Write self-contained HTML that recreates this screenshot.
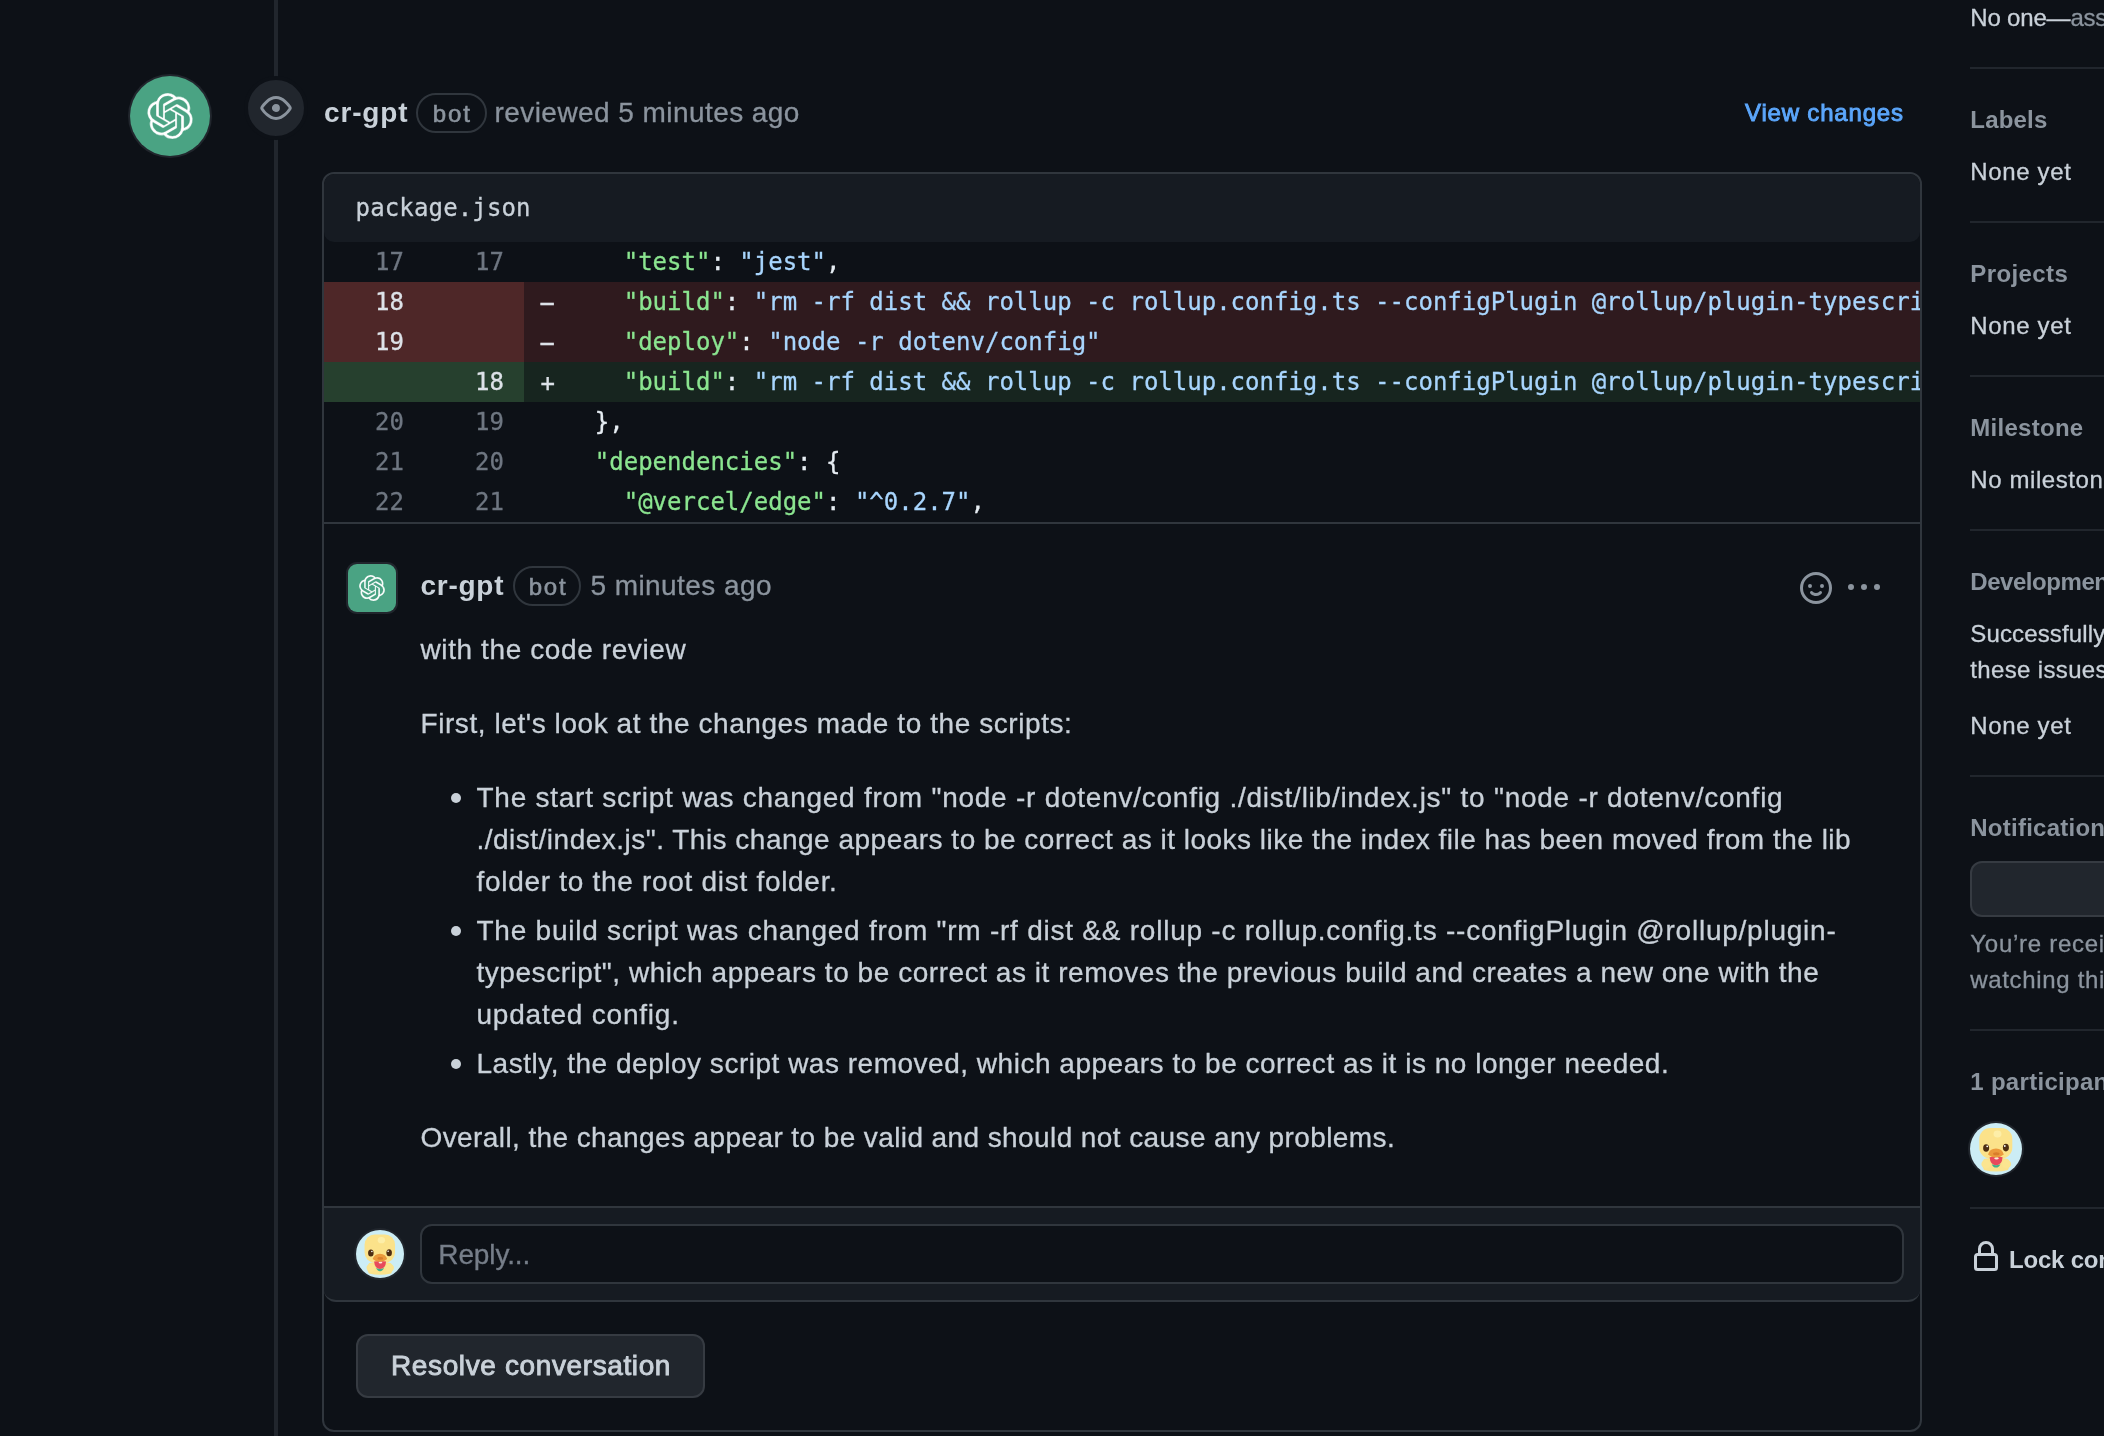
<!DOCTYPE html>
<html lang="en"><head><meta charset="utf-8"><title>cr-gpt review · package.json</title>
<style>
html,body{margin:0;padding:0;background:#0d1117;}
body{width:2104px;height:1436px;overflow:hidden;position:relative;will-change:transform;font-family:"Liberation Sans",Arial,sans-serif;color:#c9d1d9;}
.b{position:absolute;box-sizing:border-box;}
.t{position:absolute;white-space:pre;-webkit-text-stroke:0.3px currentColor;}
.md{-webkit-text-stroke:0.6px currentColor;}
.sb{-webkit-text-stroke:0.9px currentColor;}
.m{font-family:"DejaVu Sans Mono","Liberation Mono",monospace;}
svg{position:absolute;display:block;}
.k{color:#8be590}.s{color:#a8d5fd}.mk{transform:scaleX(2.1);transform-origin:7.2px 50%;}
</style></head><body>
<div class="b" style="left:274px;top:0px;width:4px;height:1436px;background:#21262d;"></div>
<div class="b" style="left:128px;top:74px;width:84px;height:84px;border-radius:50%;background:#21262d;"></div>
<div class="b" style="left:130px;top:76px;width:80px;height:80px;border-radius:50%;background:#4aa383;"></div>
<svg style="left:147px;top:93px" width="46" height="46" viewBox="0 0 24 24"><path fill="#fff" stroke="#4aa383" stroke-width="0.2" d="M22.2819 9.8211a5.9847 5.9847 0 0 0-.5157-4.9108 6.0462 6.0462 0 0 0-6.5098-2.9A6.0651 6.0651 0 0 0 4.9807 4.1818a5.9847 5.9847 0 0 0-3.9977 2.9 6.0462 6.0462 0 0 0 .7427 7.0966 5.98 5.98 0 0 0 .511 4.9107 6.051 6.051 0 0 0 6.5146 2.9001A5.9847 5.9847 0 0 0 13.2599 24a6.0557 6.0557 0 0 0 5.7718-4.2058 5.9894 5.9894 0 0 0 3.9977-2.9001 6.0557 6.0557 0 0 0-.7475-7.0729zm-9.022 12.6081a4.4755 4.4755 0 0 1-2.8764-1.0408l.1419-.0804 4.7783-2.7582a.7948.7948 0 0 0 .3927-.6813v-6.7369l2.02 1.1686a.071.071 0 0 1 .038.052v5.5826a4.504 4.504 0 0 1-4.4945 4.4944zm-9.6607-4.1254a4.4708 4.4708 0 0 1-.5346-3.0137l.142.0852 4.783 2.7582a.7712.7712 0 0 0 .7806 0l5.8428-3.3685v2.3324a.0804.0804 0 0 1-.0332.0615L9.74 19.9502a4.4992 4.4992 0 0 1-6.1408-1.6464zM2.3408 7.8956a4.485 4.485 0 0 1 2.3655-1.9728V11.6a.7664.7664 0 0 0 .3879.6765l5.8144 3.3543-2.0201 1.1685a.0757.0757 0 0 1-.071 0l-4.8303-2.7865A4.504 4.504 0 0 1 2.3408 7.872zm16.5963 3.8558L13.1038 8.364 15.1192 7.2a.0757.0757 0 0 1 .071 0l4.8303 2.7913a4.4944 4.4944 0 0 1-.6765 8.1042v-5.6772a.79.79 0 0 0-.407-.667zm2.0107-3.0231l-.142-.0852-4.7735-2.7818a.7759.7759 0 0 0-.7854 0L9.409 9.2297V6.8974a.0662.0662 0 0 1 .0284-.0615l4.8303-2.7866a4.4992 4.4992 0 0 1 6.6802 4.66zM8.3065 12.863l-2.02-1.1638a.0804.0804 0 0 1-.038-.0567V6.0742a4.4992 4.4992 0 0 1 7.3757-3.4537l-.142.0805L8.704 5.459a.7948.7948 0 0 0-.3927.6813zm1.0976-2.3654l2.602-1.4998 2.6069 1.4998v2.9994l-2.5974 1.4997-2.6067-1.4997Z"/></svg>
<div class="b" style="left:244px;top:76px;width:64px;height:64px;border-radius:50%;background:#21262d;border:4px solid #0d1117;"></div>
<svg style="left:260px;top:92px" width="32" height="32" viewBox="0 0 16 16"><path fill="#8b949e" d="M8 2c1.981 0 3.671.992 4.933 2.078 1.27 1.091 2.187 2.345 2.637 3.023a1.62 1.62 0 0 1 0 1.798c-.45.678-1.367 1.932-2.637 3.023C11.67 13.008 9.981 14 8 14c-1.981 0-3.671-.992-4.933-2.078C1.797 10.83.88 9.576.43 8.898a1.62 1.62 0 0 1 0-1.798c.45-.677 1.367-1.931 2.637-3.022C4.33 2.992 6.019 2 8 2ZM1.679 7.932a.12.12 0 0 0 0 .136c.411.622 1.241 1.75 2.366 2.717C5.176 11.758 6.527 12.5 8 12.5c1.473 0 2.825-.742 3.955-1.715 1.124-.967 1.954-2.096 2.366-2.717a.12.12 0 0 0 0-.136c-.412-.621-1.242-1.75-2.366-2.717C10.824 4.242 9.473 3.5 8 3.5c-1.473 0-2.825.742-3.955 1.715-1.124.967-1.954 2.096-2.366 2.717ZM8 10a2 2 0 1 1-.001-3.999A2 2 0 0 1 8 10Z"/></svg>
<div class="t" style="left:324.0px;top:91.5px;font-size:28px;line-height:42px;color:#c9d1d9;font-weight:700;-webkit-text-stroke:0;letter-spacing:0.831px;">cr-gpt</div>
<div class="b" style="left:416px;top:93px;width:71px;height:40px;border:2px solid #30363d;border-radius:20px;"></div>
<div class="t md" style="left:432.8px;top:95.5px;font-size:24px;line-height:36px;color:#8b949e;letter-spacing:1.820px;">bot</div>
<div class="t" style="left:494.5px;top:91.5px;font-size:28px;line-height:42px;color:#8b949e;letter-spacing:0.438px;">reviewed 5 minutes ago</div>
<div class="t sb" style="left:1745.0px;top:94.5px;font-size:24px;line-height:36px;color:#5ba6fb;letter-spacing:0.821px;">View changes</div>
<div class="b" style="left:322px;top:172px;width:1600px;height:1260px;border:2px solid #30363d;border-radius:12px;overflow:hidden;">
<div class="b" style="left:0px;top:0px;width:1596px;height:68px;background:#161b22;border-radius:10px;"></div>
<div class="t m" style="left:31.6px;top:16.0px;font-size:24px;line-height:36px;color:#c9d1d9;letter-spacing:0.140px;">package.json</div>
<div class="t m" style="left:51.1px;top:70.0px;font-size:24px;line-height:36px;color:#6e7681;">17</div>
<div class="t m" style="left:151.1px;top:70.0px;font-size:24px;line-height:36px;color:#6e7681;">17</div>
<div class="t m" style="left:213.0px;top:70.0px;font-size:24px;line-height:36px;color:#e6edf3;">      <span class="k">"test"</span>: <span class="s">"jest"</span>,</div>
<div class="b" style="left:0px;top:108px;width:200px;height:40px;background:#4e2728;"></div>
<div class="b" style="left:200px;top:108px;width:1396px;height:40px;background:#2f1a1e;"></div>
<div class="t m" style="left:51.1px;top:110.0px;font-size:24px;line-height:36px;color:#dde2e8;">18</div>
<div class="t m mk" style="left:216.4px;top:111.0px;font-size:24px;line-height:36px;color:#dde2e8;">-</div>
<div class="t m" style="left:213.0px;top:110.0px;font-size:24px;line-height:36px;color:#e6edf3;">      <span class="k">"build"</span>: <span class="s">"rm -rf dist &amp;&amp; rollup -c rollup.config.ts --configPlugin @rollup/plugin-typescript"</span>,</div>
<div class="b" style="left:0px;top:148px;width:200px;height:40px;background:#4e2728;"></div>
<div class="b" style="left:200px;top:148px;width:1396px;height:40px;background:#2f1a1e;"></div>
<div class="t m" style="left:51.1px;top:150.0px;font-size:24px;line-height:36px;color:#dde2e8;">19</div>
<div class="t m mk" style="left:216.4px;top:151.0px;font-size:24px;line-height:36px;color:#dde2e8;">-</div>
<div class="t m" style="left:213.0px;top:150.0px;font-size:24px;line-height:36px;color:#e6edf3;">      <span class="k">"deploy"</span>: <span class="s">"node -r dotenv/config"</span></div>
<div class="b" style="left:0px;top:188px;width:200px;height:40px;background:#26402e;"></div>
<div class="b" style="left:200px;top:188px;width:1396px;height:40px;background:#17251f;"></div>
<div class="t m" style="left:151.1px;top:190.0px;font-size:24px;line-height:36px;color:#dde2e8;">18</div>
<div class="t m" style="left:216.4px;top:191.0px;font-size:24px;line-height:36px;color:#dde2e8;">+</div>
<div class="t m" style="left:213.0px;top:190.0px;font-size:24px;line-height:36px;color:#e6edf3;">      <span class="k">"build"</span>: <span class="s">"rm -rf dist &amp;&amp; rollup -c rollup.config.ts --configPlugin @rollup/plugin-typescript"</span></div>
<div class="t m" style="left:51.1px;top:230.0px;font-size:24px;line-height:36px;color:#6e7681;">20</div>
<div class="t m" style="left:151.1px;top:230.0px;font-size:24px;line-height:36px;color:#6e7681;">19</div>
<div class="t m" style="left:213.0px;top:230.0px;font-size:24px;line-height:36px;color:#e6edf3;">    },</div>
<div class="t m" style="left:51.1px;top:270.0px;font-size:24px;line-height:36px;color:#6e7681;">21</div>
<div class="t m" style="left:151.1px;top:270.0px;font-size:24px;line-height:36px;color:#6e7681;">20</div>
<div class="t m" style="left:213.0px;top:270.0px;font-size:24px;line-height:36px;color:#e6edf3;">    <span class="k">"dependencies"</span>: {</div>
<div class="t m" style="left:51.1px;top:310.0px;font-size:24px;line-height:36px;color:#6e7681;">22</div>
<div class="t m" style="left:151.1px;top:310.0px;font-size:24px;line-height:36px;color:#6e7681;">21</div>
<div class="t m" style="left:213.0px;top:310.0px;font-size:24px;line-height:36px;color:#e6edf3;">      <span class="k">"@vercel/edge"</span>: <span class="s">"^0.2.7"</span>,</div>
<div class="b" style="left:0px;top:348px;width:1596px;height:2px;background:#30363d;"></div>
<div class="b" style="left:22px;top:388px;width:52px;height:52px;border-radius:11px;background:#21262d;"></div>
<div class="b" style="left:24px;top:390px;width:48px;height:48px;border-radius:9px;background:#4aa383;"></div>
<svg style="left:35px;top:401px" width="26" height="26" viewBox="0 0 24 24"><path fill="#fff" stroke="#4aa383" stroke-width="0.15" d="M22.2819 9.8211a5.9847 5.9847 0 0 0-.5157-4.9108 6.0462 6.0462 0 0 0-6.5098-2.9A6.0651 6.0651 0 0 0 4.9807 4.1818a5.9847 5.9847 0 0 0-3.9977 2.9 6.0462 6.0462 0 0 0 .7427 7.0966 5.98 5.98 0 0 0 .511 4.9107 6.051 6.051 0 0 0 6.5146 2.9001A5.9847 5.9847 0 0 0 13.2599 24a6.0557 6.0557 0 0 0 5.7718-4.2058 5.9894 5.9894 0 0 0 3.9977-2.9001 6.0557 6.0557 0 0 0-.7475-7.0729zm-9.022 12.6081a4.4755 4.4755 0 0 1-2.8764-1.0408l.1419-.0804 4.7783-2.7582a.7948.7948 0 0 0 .3927-.6813v-6.7369l2.02 1.1686a.071.071 0 0 1 .038.052v5.5826a4.504 4.504 0 0 1-4.4945 4.4944zm-9.6607-4.1254a4.4708 4.4708 0 0 1-.5346-3.0137l.142.0852 4.783 2.7582a.7712.7712 0 0 0 .7806 0l5.8428-3.3685v2.3324a.0804.0804 0 0 1-.0332.0615L9.74 19.9502a4.4992 4.4992 0 0 1-6.1408-1.6464zM2.3408 7.8956a4.485 4.485 0 0 1 2.3655-1.9728V11.6a.7664.7664 0 0 0 .3879.6765l5.8144 3.3543-2.0201 1.1685a.0757.0757 0 0 1-.071 0l-4.8303-2.7865A4.504 4.504 0 0 1 2.3408 7.872zm16.5963 3.8558L13.1038 8.364 15.1192 7.2a.0757.0757 0 0 1 .071 0l4.8303 2.7913a4.4944 4.4944 0 0 1-.6765 8.1042v-5.6772a.79.79 0 0 0-.407-.667zm2.0107-3.0231l-.142-.0852-4.7735-2.7818a.7759.7759 0 0 0-.7854 0L9.409 9.2297V6.8974a.0662.0662 0 0 1 .0284-.0615l4.8303-2.7866a4.4992 4.4992 0 0 1 6.6802 4.66zM8.3065 12.863l-2.02-1.1638a.0804.0804 0 0 1-.038-.0567V6.0742a4.4992 4.4992 0 0 1 7.3757-3.4537l-.142.0805L8.704 5.459a.7948.7948 0 0 0-.3927.6813zm1.0976-2.3654l2.602-1.4998 2.6069 1.4998v2.9994l-2.5974 1.4997-2.6067-1.4997Z"/></svg>
<div class="t" style="left:96.5px;top:390.5px;font-size:28px;line-height:42px;color:#c9d1d9;font-weight:700;-webkit-text-stroke:0;letter-spacing:0.731px;">cr-gpt</div>
<div class="b" style="left:189px;top:392px;width:68px;height:40px;border:2px solid #30363d;border-radius:20px;"></div>
<div class="t md" style="left:204.7px;top:394.5px;font-size:24px;line-height:36px;color:#8b949e;letter-spacing:1.820px;">bot</div>
<div class="t" style="left:266.5px;top:390.5px;font-size:28px;line-height:42px;color:#8b949e;letter-spacing:0.422px;">5 minutes ago</div>
<svg style="left:1476px;top:398px" width="32" height="32" viewBox="0 0 16 16"><path fill="#8b949e" d="M8 0a8 8 0 1 1 0 16A8 8 0 0 1 8 0ZM1.5 8a6.5 6.5 0 1 0 13 0 6.5 6.5 0 0 0-13 0Zm3.82 1.636a.75.75 0 0 1 1.038.175l.007.009c.103.118.22.222.35.31.264.178.683.37 1.285.37.602 0 1.02-.192 1.285-.371.13-.088.247-.192.35-.31l.007-.008a.75.75 0 0 1 1.222.87l-.022-.015c.02.013.021.015.021.015v.001l-.001.002-.002.003-.005.007-.014.019a2.066 2.066 0 0 1-.184.213c-.16.166-.338.316-.53.445-.63.418-1.37.638-2.127.629-.946 0-1.652-.308-2.126-.63a3.331 3.331 0 0 1-.715-.657l-.014-.02-.005-.006-.002-.003v-.002h-.001l.613-.432-.614.43a.75.75 0 0 1 .183-1.044ZM12 7a1 1 0 1 1-2 0 1 1 0 0 1 2 0ZM5 8a1 1 0 1 1 0-2 1 1 0 0 1 0 2Z"/></svg>
<svg style="left:1524px;top:398px" width="32" height="32" viewBox="0 0 16 16"><path fill="#8b949e" d="M8 9a1.5 1.5 0 1 0 0-3 1.5 1.5 0 0 0 0 3ZM1.5 9a1.5 1.5 0 1 0 0-3 1.5 1.5 0 0 0 0 3Zm13 0a1.5 1.5 0 1 0 0-3 1.5 1.5 0 0 0 0 3Z"/></svg>
<div class="t" style="left:96.5px;top:454.5px;font-size:28px;line-height:42px;color:#c9d1d9;letter-spacing:0.603px;">with the code review</div>
<div class="t" style="left:96.5px;top:528.5px;font-size:28px;line-height:42px;color:#c9d1d9;letter-spacing:0.572px;">First, let's look at the changes made to the scripts:</div>
<div class="t" style="left:152.5px;top:602.5px;font-size:28px;line-height:42px;color:#c9d1d9;letter-spacing:0.749px;">The start script was changed from "node -r dotenv/config ./dist/lib/index.js" to "node -r dotenv/config</div>
<div class="t" style="left:152.5px;top:644.5px;font-size:28px;line-height:42px;color:#c9d1d9;letter-spacing:0.493px;">./dist/index.js". This change appears to be correct as it looks like the index file has been moved from the lib</div>
<div class="t" style="left:152.5px;top:686.5px;font-size:28px;line-height:42px;color:#c9d1d9;letter-spacing:0.703px;">folder to the root dist folder.</div>
<div class="t" style="left:152.5px;top:735.5px;font-size:28px;line-height:42px;color:#c9d1d9;letter-spacing:0.760px;">The build script was changed from "rm -rf dist &amp;&amp; rollup -c rollup.config.ts --configPlugin @rollup/plugin-</div>
<div class="t" style="left:152.5px;top:777.5px;font-size:28px;line-height:42px;color:#c9d1d9;letter-spacing:0.544px;">typescript", which appears to be correct as it removes the previous build and creates a new one with the</div>
<div class="t" style="left:152.5px;top:819.5px;font-size:28px;line-height:42px;color:#c9d1d9;letter-spacing:0.782px;">updated config.</div>
<div class="t" style="left:152.5px;top:868.5px;font-size:28px;line-height:42px;color:#c9d1d9;letter-spacing:0.513px;">Lastly, the deploy script was removed, which appears to be correct as it is no longer needed.</div>
<div class="t" style="left:96.5px;top:942.5px;font-size:28px;line-height:42px;color:#c9d1d9;letter-spacing:0.403px;">Overall, the changes appear to be valid and should not cause any problems.</div>
<div class="b" style="left:126.5px;top:618.5px;width:10px;height:10px;border-radius:50%;background:#c9d1d9;"></div>
<div class="b" style="left:126.5px;top:751.5px;width:10px;height:10px;border-radius:50%;background:#c9d1d9;"></div>
<div class="b" style="left:126.5px;top:884.5px;width:10px;height:10px;border-radius:50%;background:#c9d1d9;"></div>
<div class="b" style="left:0px;top:1032px;width:1596px;height:96px;background:#161b22;border-top:2px solid #30363d;border-bottom:2px solid #30363d;border-radius:0 0 12px 12px;"></div>
<div class="b" style="left:30px;top:1054px;width:52px;height:52px;border-radius:50%;background:#21262d;"></div>
<svg style="left:32px;top:1056px" width="48" height="48" viewBox="0 0 52 52"><defs><clipPath id="c32"><circle cx="26" cy="26" r="26"/></clipPath></defs><g clip-path="url(#c32)"><rect width="52" height="52" fill="#ccedf5"/><path d="M14 36 Q26 33 38 36 Q41 42 38 47 Q26 50 14 47 Q11 42 14 36Z" fill="#fae38c"/><ellipse cx="16" cy="41" rx="4.6" ry="4.4" fill="#fbe590"/><ellipse cx="36.5" cy="41" rx="4.6" ry="4.4" fill="#fbe590"/><rect x="9.3" y="5" width="33" height="30.5" rx="11" ry="11" fill="#fbe28a"/><ellipse cx="27.5" cy="11" rx="4" ry="3.4" fill="#fdeea8"/><ellipse cx="16.1" cy="25" rx="3" ry="3.8" fill="#4d2d12"/><ellipse cx="35.9" cy="24.6" rx="3" ry="3.8" fill="#4d2d12"/><circle cx="17.2" cy="23.3" r="0.9" fill="#fff"/><circle cx="34.8" cy="23" r="0.9" fill="#fff"/><path d="M19.6 34.2 Q26 33 32.6 34.2 Q32 42.2 26 42.2 Q20.4 42.2 19.6 34.2Z" fill="#e84a5c"/><path d="M21.8 41.2 Q26 43.2 30.4 41.2 Q29 44.6 26 44.6 Q23 44.6 21.8 41.2Z" fill="#3fb08c"/><ellipse cx="26.5" cy="35.2" rx="2" ry="1.2" fill="#fbe9d8"/><path d="M18 31.5 Q19.5 25.8 26 25.6 Q32.4 25.8 33.8 31.5 Q30 34.6 26 34.4 Q21.5 34.6 18 31.5Z" fill="#eb9a3c"/><ellipse cx="26.3" cy="30.8" rx="3.2" ry="1.5" fill="#d97d2b"/></g></svg>
<div class="b" style="left:96px;top:1050px;width:1484px;height:60px;background:#0d1117;border:2px solid #30363d;border-radius:12px;"></div>
<div class="t" style="left:114.3px;top:1060.0px;font-size:28px;line-height:42px;color:#767e89;letter-spacing:-0.123px;">Reply...</div>
<div class="b" style="left:32px;top:1160px;width:349px;height:64px;background:#21262d;border:2px solid #363b42;border-radius:12px;"></div>
<div class="t sb" style="left:67.0px;top:1171.0px;font-size:28px;line-height:42px;color:#c9d1d9;letter-spacing:0.618px;">Resolve conversation</div>
</div>
<div class="t" style="left:1970.3px;top:-0.5px;font-size:24px;line-height:36px;color:#c9d1d9;letter-spacing:-0.187px;">No one—<span style="color:#8b949e">assign yourself</span></div>
<div class="b" style="left:1970px;top:67px;width:140px;height:2px;background:#21262d;"></div>
<div class="t" style="left:1970.3px;top:101.5px;font-size:24px;line-height:36px;color:#8b949e;font-weight:700;-webkit-text-stroke:0;letter-spacing:0.182px;">Labels</div>
<div class="t" style="left:1970.3px;top:153.5px;font-size:24px;line-height:36px;color:#c9d1d9;letter-spacing:0.650px;">None yet</div>
<div class="b" style="left:1970px;top:221px;width:140px;height:2px;background:#21262d;"></div>
<div class="t" style="left:1970.3px;top:255.5px;font-size:24px;line-height:36px;color:#8b949e;font-weight:700;-webkit-text-stroke:0;letter-spacing:0.406px;">Projects</div>
<div class="t" style="left:1970.3px;top:307.5px;font-size:24px;line-height:36px;color:#c9d1d9;letter-spacing:0.650px;">None yet</div>
<div class="b" style="left:1970px;top:375px;width:140px;height:2px;background:#21262d;"></div>
<div class="t" style="left:1970.3px;top:409.5px;font-size:24px;line-height:36px;color:#8b949e;font-weight:700;-webkit-text-stroke:0;letter-spacing:0.277px;">Milestone</div>
<div class="t" style="left:1970.3px;top:461.5px;font-size:24px;line-height:36px;color:#c9d1d9;letter-spacing:0.586px;">No milestone</div>
<div class="b" style="left:1970px;top:529px;width:140px;height:2px;background:#21262d;"></div>
<div class="t" style="left:1970.3px;top:563.5px;font-size:24px;line-height:36px;color:#8b949e;font-weight:700;-webkit-text-stroke:0;letter-spacing:-0.452px;">Development</div>
<div class="t" style="left:1970.3px;top:615.5px;font-size:24px;line-height:36px;color:#c9d1d9;letter-spacing:0.143px;">Successfully merging this pull request may close</div>
<div class="t" style="left:1970.3px;top:651.5px;font-size:24px;line-height:36px;color:#c9d1d9;letter-spacing:0.350px;">these issues.</div>
<div class="t" style="left:1970.3px;top:707.5px;font-size:24px;line-height:36px;color:#c9d1d9;letter-spacing:0.650px;">None yet</div>
<div class="b" style="left:1970px;top:775px;width:140px;height:2px;background:#21262d;"></div>
<div class="t" style="left:1970.3px;top:809.5px;font-size:24px;line-height:36px;color:#8b949e;font-weight:700;-webkit-text-stroke:0;letter-spacing:0.242px;">Notifications</div>
<div class="b" style="left:1970px;top:861px;width:200px;height:56px;background:#21262d;border:2px solid #363b42;border-radius:12px;"></div>
<div class="t" style="left:1970.3px;top:925.5px;font-size:24px;line-height:36px;color:#8b949e;letter-spacing:0.731px;">You’re receiving notifications because you’re</div>
<div class="t" style="left:1970.3px;top:961.5px;font-size:24px;line-height:36px;color:#8b949e;letter-spacing:0.660px;">watching this repository.</div>
<div class="b" style="left:1970px;top:1029px;width:140px;height:2px;background:#21262d;"></div>
<div class="t" style="left:1970.3px;top:1063.5px;font-size:24px;line-height:36px;color:#8b949e;font-weight:700;-webkit-text-stroke:0;letter-spacing:0.297px;">1 participant</div>
<div class="b" style="left:1968px;top:1121px;width:56px;height:56px;border-radius:50%;background:#21262d;"></div>
<svg style="left:1970px;top:1123px" width="52" height="52" viewBox="0 0 52 52"><defs><clipPath id="c1970"><circle cx="26" cy="26" r="26"/></clipPath></defs><g clip-path="url(#c1970)"><rect width="52" height="52" fill="#ccedf5"/><path d="M14 36 Q26 33 38 36 Q41 42 38 47 Q26 50 14 47 Q11 42 14 36Z" fill="#fae38c"/><ellipse cx="16" cy="41" rx="4.6" ry="4.4" fill="#fbe590"/><ellipse cx="36.5" cy="41" rx="4.6" ry="4.4" fill="#fbe590"/><rect x="9.3" y="5" width="33" height="30.5" rx="11" ry="11" fill="#fbe28a"/><ellipse cx="27.5" cy="11" rx="4" ry="3.4" fill="#fdeea8"/><ellipse cx="16.1" cy="25" rx="3" ry="3.8" fill="#4d2d12"/><ellipse cx="35.9" cy="24.6" rx="3" ry="3.8" fill="#4d2d12"/><circle cx="17.2" cy="23.3" r="0.9" fill="#fff"/><circle cx="34.8" cy="23" r="0.9" fill="#fff"/><path d="M19.6 34.2 Q26 33 32.6 34.2 Q32 42.2 26 42.2 Q20.4 42.2 19.6 34.2Z" fill="#e84a5c"/><path d="M21.8 41.2 Q26 43.2 30.4 41.2 Q29 44.6 26 44.6 Q23 44.6 21.8 41.2Z" fill="#3fb08c"/><ellipse cx="26.5" cy="35.2" rx="2" ry="1.2" fill="#fbe9d8"/><path d="M18 31.5 Q19.5 25.8 26 25.6 Q32.4 25.8 33.8 31.5 Q30 34.6 26 34.4 Q21.5 34.6 18 31.5Z" fill="#eb9a3c"/><ellipse cx="26.3" cy="30.8" rx="3.2" ry="1.5" fill="#d97d2b"/></g></svg>
<div class="b" style="left:1970px;top:1207px;width:140px;height:2px;background:#21262d;"></div>
<svg style="left:1970px;top:1241px" width="32" height="32" viewBox="0 0 16 16"><path fill="#c9d1d9" d="M4 4a4 4 0 0 1 8 0v2h.25c.966 0 1.75.784 1.75 1.75v5.5A1.75 1.75 0 0 1 12.25 15h-8.5A1.75 1.75 0 0 1 2 13.25v-5.5C2 6.784 2.784 6 3.75 6H4Zm8.25 3.5h-8.5a.25.25 0 0 0-.25.25v5.5c0 .138.112.25.25.25h8.5a.25.25 0 0 0 .25-.25v-5.5a.25.25 0 0 0-.25-.25ZM10.5 6V4a2.5 2.5 0 1 0-5 0v2Z"/></svg>
<div class="t" style="left:2009.0px;top:1241.5px;font-size:24px;line-height:36px;color:#c9d1d9;font-weight:700;-webkit-text-stroke:0;letter-spacing:-0.199px;">Lock conversation</div>
</body></html>
